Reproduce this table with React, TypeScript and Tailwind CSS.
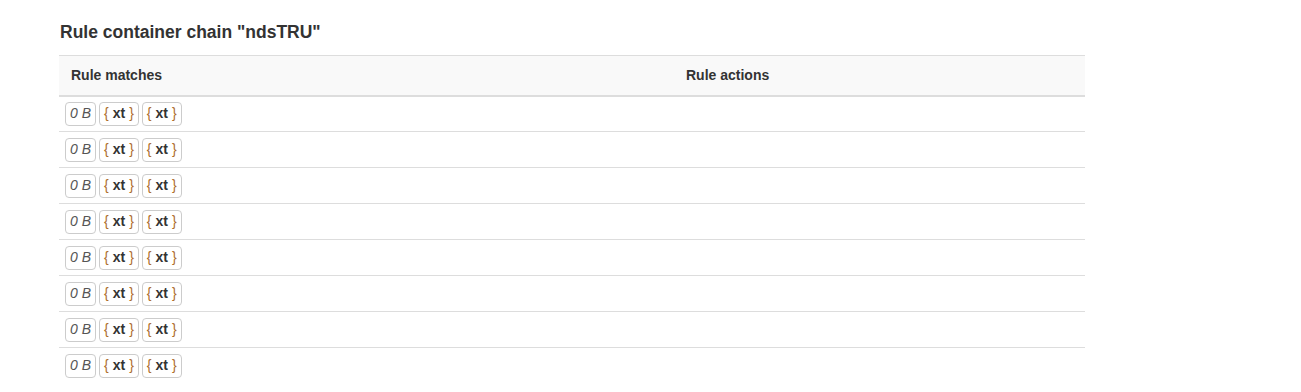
import React from 'react'

const rows = Array.from({ length: 8 })

function Brace({ children }: { children: React.ReactNode }) {
  return <span className="text-[#ad6e2e] font-normal">{children}</span>
}

function XtBadge() {
  return (
    <span className="inline-flex items-center h-6 px-[4px] border border-[#cccccc] rounded-[4px] bg-white text-[14px] text-[#333] font-bold gap-[4px]">
      <Brace>{'{'}</Brace>
      <span>xt</span>
      <Brace>{'}'}</Brace>
    </span>
  )
}

export default function App() {
  return (
    <div className="min-h-screen bg-white font-['Liberation_Sans',Arial,sans-serif] text-[#333]">
      <div className="pl-[59px] pt-[22px] w-[1085px]">
        <h3 className="text-[17.5px] font-bold leading-5 pl-px text-[#333]">Rule container chain "ndsTRU"</h3>

        <table className="mt-[13px] w-[1026px] border-collapse text-[14px]">
          <thead>
            <tr className="bg-[#f9f9f9] border-t border-[#dddddd] border-b-2">
              <th className="w-[615px] h-[40px] px-3 text-left font-bold align-middle">Rule matches</th>
              <th className="px-3 text-left font-bold align-middle">Rule actions</th>
            </tr>
          </thead>
          <tbody>
            {rows.map((_, i) => (
              <tr key={i} className={i === 0 ? '' : 'border-t border-[#dddddd]'}>
                <td className="h-[36px] pl-[6px] align-middle">
                  <div className="flex gap-[3px]">
                    <span className="inline-flex items-center h-6 px-[4px] border border-[#cccccc] rounded-[4px] bg-white text-[14px] italic text-[#555]">
                      0 B
                    </span>
                    <XtBadge />
                    <XtBadge />
                  </div>
                </td>
                <td></td>
              </tr>
            ))}
          </tbody>
        </table>
      </div>
    </div>
  )
}
